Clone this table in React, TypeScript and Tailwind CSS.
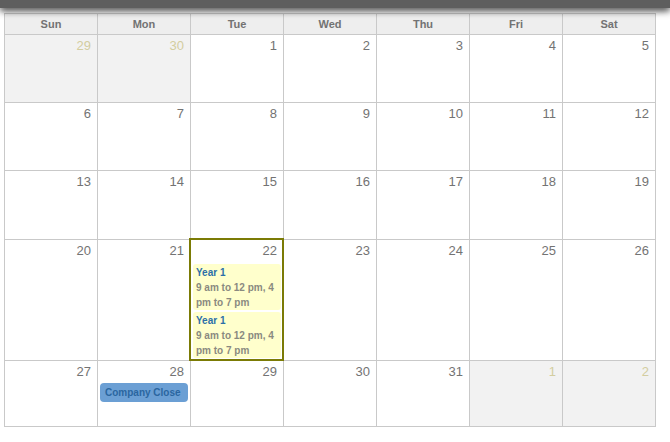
import React from "react";

type Ev = { title?: string; time?: string; kind: "year" | "close" };
type Day = { n: number; other?: boolean; today?: boolean; events?: Ev[] };

const weeks: Day[][] = [
  [{ n: 29, other: true }, { n: 30, other: true }, { n: 1 }, { n: 2 }, { n: 3 }, { n: 4 }, { n: 5 }],
  [{ n: 6 }, { n: 7 }, { n: 8 }, { n: 9 }, { n: 10 }, { n: 11 }, { n: 12 }],
  [{ n: 13 }, { n: 14 }, { n: 15 }, { n: 16 }, { n: 17 }, { n: 18 }, { n: 19 }],
  [
    { n: 20 },
    { n: 21 },
    {
      n: 22,
      today: true,
      events: [
        { kind: "year", title: "Year 1", time: "9 am to 12 pm, 4 pm to 7 pm" },
        { kind: "year", title: "Year 1", time: "9 am to 12 pm, 4 pm to 7 pm" },
      ],
    },
    { n: 23 },
    { n: 24 },
    { n: 25 },
    { n: 26 },
  ],
  [
    { n: 27 },
    { n: 28, events: [{ kind: "close", title: "Company Close" }] },
    { n: 29 },
    { n: 30 },
    { n: 31 },
    { n: 1, other: true },
    { n: 2, other: true },
  ],
];

const heads = ["Sun", "Mon", "Tue", "Wed", "Thu", "Fri", "Sat"];

export default function App() {
  return (
    <div
      className="w-[670px] h-[442px] bg-white overflow-hidden"
      style={{ fontFamily: '"Liberation Sans", Arial, sans-serif' }}
    >
      <div className="relative z-10 h-[8px] bg-[#5e5e5e] shadow-[0_3px_7px_rgba(0,0,0,0.75)]" />
      <div className="ml-[4px] mt-[5px] w-[652px] border-l border-t border-[#c9c9c9] grid grid-cols-[repeat(7,93px)] grid-rows-[21px_68px_68px_69px_121px_66px]">
        {heads.map((h) => (
          <div
            key={h}
            className="border-r border-b border-[#c9c9c9] bg-[#eeeeee] flex items-center justify-center text-[11px] font-bold text-[#737373]"
          >
            {h}
          </div>
        ))}
        {weeks.flat().map((d, i) => (
          <div
            key={i}
            className={`relative border-r border-b border-[#c9c9c9] flex flex-col ${
              d.other ? "bg-[#f2f2f2]" : "bg-white"
            }`}
          >
            {d.today && (
              <div className="absolute top-[-2px] left-[-2px] right-[-1px] bottom-[-1px] border-2 border-[#7b7b05] pointer-events-none" />
            )}
            <div
              className={`text-right text-[13px] leading-[15px] pt-[3px] pr-[6px] ${
                d.other ? "text-[#d3cda0]" : "text-[#737373]"
              }`}
            >
              {d.n}
            </div>
            {d.events && (
              <div className={`flex flex-col gap-[2px] ${d.today ? "mt-[6px] px-[2px]" : "mt-[4px] px-[2px]"}`}>
                {d.events.map((e, j) =>
                  e.kind === "year" ? (
                    <div
                      key={j}
                      className="bg-[#ffffcc] rounded-[3px] px-[3px] pt-[1px] text-[10px] leading-[15px] font-bold"
                    >
                      <div className="text-[#2c6fa8]">{e.title}</div>
                      <div className="text-[#8a8a80]">{e.time}</div>
                    </div>
                  ) : (
                    <div
                      key={j}
                      className="bg-[#6b9fd4] rounded-[4px] pl-[5px] h-[19px] flex items-center text-[10px] font-bold text-[#2a66a0]"
                    >
                      {e.title}
                    </div>
                  )
                )}
              </div>
            )}
          </div>
        ))}
      </div>
    </div>
  );
}
